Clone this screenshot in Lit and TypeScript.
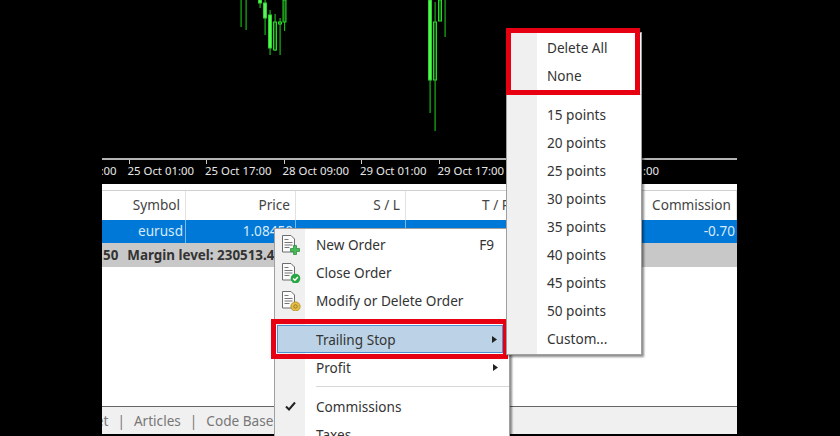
import { LitElement, html, css, svg } from "lit";
import { customElement } from "lit/decorators.js";

const wicks: [number, number, number, number][] = [
  [241, 0, 27, 1], [246, 0, 30, 1], [260, 0, 8, 1], [265, 0, 35, 1], [270, 10, 55, 1],
  [275, 14, 51, 1], [280, 18, 55, 1], [284.5, 0, 31, 1], [430, 0, 113, 1], [435, 2, 131, 1],
  [440, 0, 21, 1], [445, 0, 37, 1],
];
const bodies: [number, number, number, number, boolean][] = [
  [258.5, 0, 3, 3, true], [263.5, 3, 15, 3, true], [268.5, 15, 33, 3, true], [273.5, 22, 28, 3, false],
  [278.5, 22, 2, 3, false], [283, 0, 22, 3, false], [428.5, 0, 80, 3, true], [433.5, 22, 58, 3, false],
  [438.5, 0, 21, 3, false],
];
const ticks = ["24 Oct 09:00", "25 Oct 01:00", "25 Oct 17:00", "28 Oct 09:00", "29 Oct 01:00", "29 Oct 17:00", "30 Oct 09:00", "31 Oct 01:00"];
const heads = [["Symbol", 84], ["Price", 110], ["S / L", 110], ["T / P", 110], ["Swap", 110], ["Commission", 111]] as [string, number][];
const cells = ["eurusd", "1.08450", "", "", "", "-0.70"];
const points = [15, 20, 25, 30, 35, 40, 45, 50];

const badge = (kind: string) => {
  if (kind === "plus") return svg`<path d="M12.5 10.5h3v3h3v3h-3v3h-3v-3h-3v-3h3z" fill="#46bb55" stroke="#23853a" stroke-width=".7"/>`;
  if (kind === "check") return svg`<circle cx="14.5" cy="15.5" r="4.8" fill="#28a745"/><path d="M12.2 15.5l1.7 1.7 3-3.2" fill="none" stroke="#fff" stroke-width="1.5"/>`;
  return svg`<circle cx="14.5" cy="15.5" r="4.6" fill="#e3bd45" stroke="#b8922a"/><circle cx="14.5" cy="15.5" r="1.7" fill="none" stroke="#9a7a20"/>`;
};
const docIcon = (kind: string) => html`<svg class="ico" width="20" height="20" viewBox="0 0 20 20">
  <path d="M1.5 .5h8.5l3.5 3.5v13h-12z" fill="#fbfbfb" stroke="#6d6d6d"/>
  <path d="M3.5 4.5h4M3.5 7.5h8M3.5 10h8M3.5 12.5h5" stroke="#777" fill="none"/>
  ${badge(kind)}
</svg>`;
const arrow = html`<svg class="arr" width="5" height="7" viewBox="0 0 5 7"><path d="M0 0l5 3.5L0 7z" fill="#222"/></svg>`;

@customElement("app-root")
export class AppRoot extends LitElement {
  static styles = css`
    :host { display: block; width: 840px; height: 436px; position: relative; overflow: hidden; background: #000;
      font-family: "Noto Sans", sans-serif; font-size: 13.6px; color: #333; }
    .chart { display: block; }
    .axis { margin-left: 102px; width: 635px; height: 26px; box-sizing: border-box; border-top: 2px solid #b4b4b4;
      display: flex; overflow: hidden; }
    .tick { flex: 0 0 77.5px; border-left: 1px solid #ccc; height: 4px; color: #e8e8e8; font-size: 11.4px; white-space: nowrap; line-height: 12px; box-sizing: border-box; }
    .tick span { display: block; padding-top: 5px; margin-left: -2px; }
    .tick:first-child { margin-left: -51px; }
    .panel { margin-left: 102px; width: 635px; height: 250px; background: #fff; display: flex; flex-direction: column; overflow: hidden; }
    .cap { height: 6px; border-bottom: 1px solid #d0d0d0; flex: none; }
    .row { display: flex; flex: none; }
    .head { height: 29px; }
    .head div { box-sizing: border-box; border-right: 1px solid #e2e2e2; text-align: right; padding-right: 5px; line-height: 28px; color: #444; }
    .sel { height: 23px; background: #0078d7; color: #d6eafa; }
    .sel div { box-sizing: border-box; border-right: 1px solid #7db8e8; text-align: right; padding-right: 2px; line-height: 22px; }
    .sel div:last-child { border-right: none; }
    .sum { height: 24px; flex: none; background: #c8c8c8; font-weight: 700; line-height: 24px; white-space: nowrap; padding-left: 1px; font-size: 13.4px; color: #333; display: flex; gap: 9px; }
    .blank { flex: 1; }
    .tabs { height: 28px; flex: none; box-sizing: border-box; border-top: 1px solid #666; background: #f0f0f0; color: #777; display: flex; align-items: center; gap: 9px; white-space: nowrap; overflow: hidden; }
    .tabs .m { margin-left: -39px; }
    .menu { position: absolute; background: #fff; box-sizing: border-box; border: 1px solid #a0a0a0; box-shadow: 2px 2px 2px rgba(0, 0, 0, 0.45);
      color: #333; overflow: hidden; }
    .menu::before { content: ""; position: absolute; left: 0; top: 0; bottom: 0; width: 30px; background: #f0f0f0; }
    .m1 { left: 274px; top: 228px; width: 236px; height: 240px; padding-top: 1px; }
    .m2 { left: 506px; top: 32px; width: 136px; height: 323px; }
    .item { position: relative; height: 28px; display: flex; align-items: center; padding-left: 41px; white-space: nowrap; }
    .m2 .item { padding-left: 40px; }
    .item .ico { position: absolute; left: 6px; top: 5px; }
    .item .key { position: absolute; right: 15px; }
    .item .arr { position: absolute; right: 11px; top: 11px; }
    .item .chk { position: absolute; left: 10px; top: 9px; }
    .sep { position: relative; height: 11px; display: flex; align-items: center; margin-left: 41px; }
    .sep::after { content: ""; display: block; width: 100%; height: 1px; background: #d7d7d7; }
    .hot { position: absolute; left: 277px; top: 325px; width: 226px; height: 28px; box-sizing: border-box; background: #bcd3e7; border: 1px solid #4d8fcf;
      display: flex; align-items: center; padding-left: 38px; color: #333; }
    .hot .arr { position: absolute; right: 5px; top: 10px; }
    .red { position: absolute; box-sizing: border-box; border: 5px solid #e60012; }
    .r1 { left: 271px; top: 319px; width: 237px; height: 40px; }
    .r2 { left: 506px; top: 28px; width: 134px; height: 67px; }
  `;

  render() {
    return html`
      <svg class="chart" width="840" height="158" viewBox="0 0 840 158">
        ${wicks.map(([x, a, b]) => svg`<rect x=${x - 0.5} y=${a} width="1.2" height=${b - a} fill="#17b317"/>`)}
        ${bodies.map(([x, y, h, w, f]) => svg`<rect x=${x} y=${y} width=${w} height=${h} fill=${f ? "#5cf25c" : "#0c5c0c"} stroke="#2bd62b" stroke-width="1"/>`)}
      </svg>
      <div class="axis">
        ${ticks.map((t) => html`<div class="tick"><span>${t}</span></div>`)}
      </div>
      <div class="panel">
        <div class="cap"></div>
        <div class="row head">
          ${heads.map(([t, w]) => html`<div style="width:${w}px">${t}</div>`)}
        </div>
        <div class="row sel">
          ${heads.map(([, w], i) => html`<div style="width:${w}px">${cells[i]}</div>`)}
        </div>
        <div class="sum"><span>50</span><span>Margin level: 230513.47 %</span></div>
        <div class="blank"></div>
        <div class="tabs"><span class="m">Market</span><span>|</span><span>Articles</span><span>|</span><span>Code Base</span></div>
      </div>

      <div class="menu m1">
        <div class="item">${docIcon("plus")}New Order<span class="key">F9</span></div>
        <div class="item">${docIcon("check")}Close Order</div>
        <div class="item">${docIcon("gear")}Modify or Delete Order</div>
        <div class="sep"></div>
        <div class="item"></div>
        <div class="item">Profit${arrow}</div>
        <div class="sep"></div>
        <div class="item">
          <svg class="chk" width="11" height="10" viewBox="0 0 11 10"><path d="M1 5.5l3 3L10 1.5" fill="none" stroke="#222" stroke-width="2"/></svg>
          Commissions
        </div>
        <div class="item">Taxes</div>
      </div>
      <div class="hot">Trailing Stop${arrow}</div>
      <div class="red r1"></div>

      <div class="menu m2">
        <div class="item">Delete All</div>
        <div class="item">None</div>
        <div class="sep"></div>
        ${points.map((p) => html`<div class="item">${p} points</div>`)}
        <div class="item">Custom...</div>
      </div>
      <div class="red r2"></div>
    `;
  }
}
